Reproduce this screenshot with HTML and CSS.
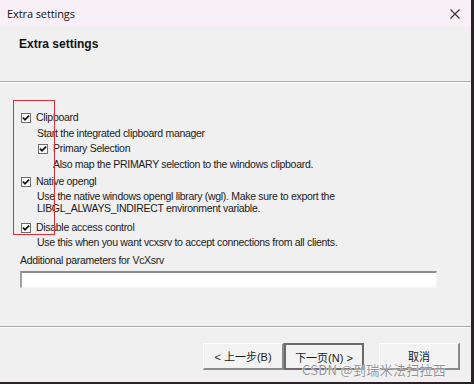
FILE: index.html
```html
<!DOCTYPE html>
<html lang="en">
<head>
<meta charset="utf-8">
<title>Extra settings</title>
<link rel="stylesheet" href="styles.css">
</head>
<body>
<div class="window">
  <div class="titlebar">
    <span class="title">Extra settings</span>
    <svg class="close" width="10" height="10" viewBox="0 0 10 10"><path d="M0.5 0.5L9.5 9.5M9.5 0.5L0.5 9.5" stroke="#333" stroke-width="1.1" fill="none"/></svg>
  </div>
  <div class="header"><span class="header-title">Extra settings</span></div>
  <div class="content">
    <div class="row lvl1">
      <svg class="cb" width="10" height="10" viewBox="0 0 10 10"><rect x="0.5" y="0.5" width="9" height="9" fill="#fff" stroke="#6e6e6e"/><path d="M2 4.6L4 6.8L8 2.6" stroke="#111" stroke-width="1.8" fill="none"/></svg>
      <span>Clipboard</span>
    </div>
    <div class="desc lvl1 m3">Start the integrated clipboard manager</div>
    <div class="row lvl2 m2">
      <svg class="cb" width="10" height="10" viewBox="0 0 10 10"><rect x="0.5" y="0.5" width="9" height="9" fill="#fff" stroke="#6e6e6e"/><path d="M2 4.6L4 6.8L8 2.6" stroke="#111" stroke-width="1.8" fill="none"/></svg>
      <span>Primary Selection</span>
    </div>
    <div class="desc lvl2 m3">Also map the PRIMARY selection to the windows clipboard.</div>
    <div class="row lvl1 m4">
      <svg class="cb" width="10" height="10" viewBox="0 0 10 10"><rect x="0.5" y="0.5" width="9" height="9" fill="#fff" stroke="#6e6e6e"/><path d="M2 4.6L4 6.8L8 2.6" stroke="#111" stroke-width="1.8" fill="none"/></svg>
      <span>Native opengl</span>
    </div>
    <div class="desc lvl1 m2 wrap">Use the native windows opengl library (wgl). Make sure to export the<br>LIBGL_ALWAYS_INDIRECT environment variable.</div>
    <div class="row lvl1 m7">
      <svg class="cb" width="10" height="10" viewBox="0 0 10 10"><rect x="0.5" y="0.5" width="9" height="9" fill="#fff" stroke="#6e6e6e"/><path d="M2 4.6L4 6.8L8 2.6" stroke="#111" stroke-width="1.8" fill="none"/></svg>
      <span>Disable access control</span>
    </div>
    <div class="desc lvl1 m2">Use this when you want vcxsrv to accept connections from all clients.</div>
    <div class="label m5">Additional parameters for VcXsrv</div>
    <div class="input"></div>
    <div class="redbox"></div>
  </div>
  <div class="footer">
    <div class="btn">&lt; 上一步(B)</div>
    <div class="btn default">下一页(N) &gt;</div>
    <div class="btn cancel">取消</div>
  </div>
  <div class="watermark">CSDN @到瑞米法扫拉西</div>
</div>
</body>
</html>
```

FILE: styles.css
```css
html, body {
  margin: 0;
  padding: 0;
}
body {
  width: 474px;
  height: 384px;
  background: #2a2228;
  overflow: hidden;
}
.window {
  position: relative;
  width: 471px;
  height: 382px;
  background: #f0f0f0;
  display: flex;
  flex-direction: column;
  font-family: "Liberation Sans", Arial, "Noto Sans CJK SC", sans-serif;
  font-size: 10.5px;
  color: #1a1a1a;
}
.titlebar {
  height: 27px;
  flex: none;
  background: #f9eff7;
  display: flex;
  align-items: center;
  padding: 0 11px 0 7px;
  justify-content: space-between;
}
.title {
  font-family: "Open Sans", "Noto Sans", sans-serif;
  font-size: 11px;
  color: #111;
  letter-spacing: -0.1px;
}
.close {
  display: block;
}
.header {
  height: 55px;
  flex: none;
  border-bottom: 1px solid #a9a9a9;
  box-shadow: 0 1px 0 #fdfdfd;
  padding: 10px 0 0 19px;
  box-sizing: border-box;
}
.header-title {
  font-weight: bold;
  font-size: 12px;
  line-height: 14px;
  color: #111;
}
.content {
  position: relative;
  height: 244px;
  flex: none;
  box-sizing: border-box;
  padding: 29px 0 0 0;
}
.row {
  display: flex;
  align-items: center;
  height: 13px;
  line-height: 13px;
}
.row.lvl1 { padding-left: 21px; }
.row.lvl2 { padding-left: 38px; }
.row .cb { margin-right: 5px; flex: none; }
.desc {
  line-height: 13px;
  letter-spacing: -0.3px;
  white-space: nowrap;
}
.row span {
  letter-spacing: -0.3px;
}
.desc.lvl1 { padding-left: 37px; }
.desc.lvl2 { padding-left: 53px; }
.desc.wrap { line-height: 12px; }
.m2 { margin-top: 2px; }
.m3 { margin-top: 3px; }
.m4 { margin-top: 4px; }
.m5 { margin-top: 5px; }
.m7 { margin-top: 7px; }
.label {
  padding-left: 20px;
  line-height: 13px;
  letter-spacing: -0.3px;
}
.input {
  margin: 4px 0 0 20px;
  width: 417px;
  height: 17px;
  box-sizing: border-box;
  background: #fff;
  border-top: 2px solid #8c8c8c;
  border-left: 2px solid #a0a0a0;
  border-right: 1px solid #f4f4f4;
  border-bottom: 1px solid #f4f4f4;
}
.redbox {
  position: absolute;
  left: 13px;
  top: 18px;
  width: 40px;
  height: 133px;
  border: 1.5px solid #d5303a;
}
.footer {
  flex: 1;
  border-top: 1px solid #a9a9a9;
  box-shadow: inset 0 1px 0 #fdfdfd;
  display: flex;
  align-items: flex-start;
  padding: 16px 0 0 203px;
  box-sizing: border-box;
}
.btn {
  width: 81px;
  height: 27px;
  box-sizing: border-box;
  background: #f3f3f3;
  border-top: 1px solid #fdfdfd;
  border-left: 1px solid #fdfdfd;
  border-right: 2px solid #8a8a8a;
  border-bottom: 2px solid #8a8a8a;
  display: flex;
  align-items: center;
  justify-content: center;
  font-family: "Liberation Sans", "Noto Sans CJK SC", sans-serif;
  font-size: 11px;
  color: #1a1a1a;
}
.btn.default {
  width: 80px;
  border: 2px solid #6a6a6a;
}
.btn.cancel {
  margin-left: 15px;
}
.watermark {
  position: absolute;
  left: 302px;
  top: 362px;
  font-family: "Noto Sans CJK SC", "Liberation Sans", sans-serif;
  font-size: 13px;
  line-height: 16px;
  color: rgba(110, 110, 110, 0.75);
  text-shadow: 0 0 1px #fff, 0 0 1px #fff;
  letter-spacing: 0.3px;
  white-space: nowrap;
}
```
